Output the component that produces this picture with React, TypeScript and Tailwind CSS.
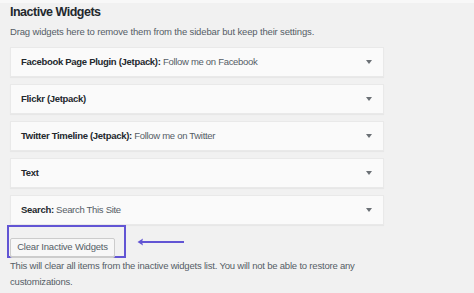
import React from "react";

const widgets: { title: string; sub?: string }[] = [
  { title: "Facebook Page Plugin (Jetpack)", sub: "Follow me on Facebook" },
  { title: "Flickr (Jetpack)" },
  { title: "Twitter Timeline (Jetpack)", sub: "Follow me on Twitter" },
  { title: "Text" },
  { title: "Search", sub: "Search This Site" },
];

function Caret() {
  return (
    <svg width="6" height="4" viewBox="0 0 6 4" className="shrink-0">
      <path d="M0 0 H6 L3 4 Z" fill="#6b7075" />
    </svg>
  );
}

export default function App() {
  return (
    <div
      className="w-[474px] h-[293px] bg-[#f1f1f1] overflow-hidden border-t-[3px] border-[#f8f8f8]"
      style={{ fontFamily: "'Liberation Sans', Arial, sans-serif" }}
    >
      <div className="pl-[10px] pr-[90px]">
        <h2 className="text-[12.5px] leading-[18px] font-bold text-[#23282d] tracking-[-0.5px]">
          Inactive Widgets
        </h2>
        <p className="mt-[4px] text-[9.5px] leading-[13px] text-[#555d66] tracking-[-0.15px] whitespace-nowrap">
          Drag widgets here to remove them from the sidebar but keep their settings.
        </p>
        <div className="mt-[9px] flex flex-col gap-[7px]">
          {widgets.map((w) => (
            <div
              key={w.title}
              className="h-[30px] flex items-center justify-between pl-[10px] pr-[11px] bg-[#fafafa] border border-[#e9e9e9] shadow-[0_1px_1px_rgba(0,0,0,0.04)]"
            >
              <div className="text-[9.5px] text-[#23282d] tracking-[-0.3px] whitespace-nowrap">
                <span className="font-bold">{w.title}</span>
                {w.sub && (
                  <span className="text-[#555d66]">
                    <span className="font-bold text-[#23282d]">:</span> {w.sub}
                  </span>
                )}
              </div>
              <Caret />
            </div>
          ))}
        </div>
        <div className="flex items-center">
          <div className="-ml-[3px] w-[119px] h-[33px] border-2 border-[#6255d4] pl-[1px] pt-[6px]">
            <button className="h-[19px] w-[105px] bg-[#f7f7f7] border border-[#cccccc] rounded-[2px] text-[9.5px] text-[#555d66] tracking-[-0.2px] whitespace-nowrap shadow-[0_1px_0_#cccccc]">
              Clear Inactive Widgets
            </button>
          </div>
          <svg width="48" height="8" viewBox="0 0 48 8" className="ml-[11px] mt-[1px]">
            <path d="M47 4 H3" stroke="#6255d4" strokeWidth="2" />
            <path d="M0.5 4 L6 0.5 L5 4 L6 7.5 Z" fill="#6255d4" />
          </svg>
        </div>
        <p className="mt-[0px] text-[9.5px] leading-[16px] text-[#555d66] tracking-[-0.2px]">
          This will clear all items from the inactive widgets list. You will not be able to restore any customizations.
        </p>
      </div>
    </div>
  );
}
